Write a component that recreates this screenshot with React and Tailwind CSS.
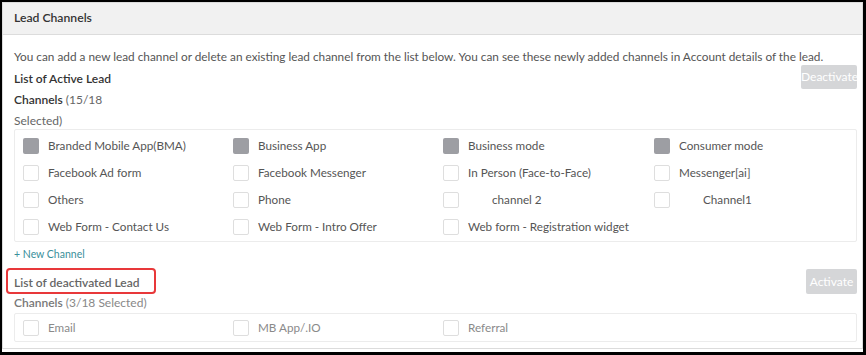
import React from 'react';

const activeChannels = [
  { label: 'Branded Mobile App(BMA)', checked: true },
  { label: 'Business App', checked: true },
  { label: 'Business mode', checked: true },
  { label: 'Consumer mode', checked: true },
  { label: 'Facebook Ad form' },
  { label: 'Facebook Messenger' },
  { label: 'In Person (Face-to-Face)' },
  { label: 'Messenger[ai]' },
  { label: 'Others' },
  { label: 'Phone' },
  { label: 'channel 2', indent: true },
  { label: 'Channel1', indent: true },
  { label: 'Web Form - Contact Us' },
  { label: 'Web Form - Intro Offer' },
  { label: 'Web form - Registration widget' },
];

const deactivatedChannels = [
  { label: 'Email' },
  { label: 'MB App/.IO' },
  { label: 'Referral' },
];

const ChannelItem = ({ label, checked, indent, muted }) => (
  <div className="flex items-center h-[27px]">
    {checked ? (
      <span className="w-4 h-4 rounded-[2px] bg-[#9d9ea3] shrink-0" />
    ) : (
      <span className="w-4 h-4 rounded-[2px] border border-[#dedede] bg-white shrink-0" />
    )}
    <span
      className={
        'ml-[9px] text-[11.7px] whitespace-nowrap ' +
        (indent ? 'pl-6 ' : '') +
        (muted ? 'text-[#8a8a8a]' : 'text-[#555]')
      }
    >
      {label}
    </span>
  </div>
);

export default function App() {
  return (
    <div
      className="w-[866px] h-[355px] bg-white border-black border-t-2 border-l-2 border-r-[3px] border-b-[3px] overflow-hidden"
      style={{ fontFamily: 'Lato, "Noto Sans", sans-serif' }}
    >
      <div className="h-[347px] border border-[#dcdcdc] flex flex-col">
        {/* Header */}
        <div className="h-[32px] shrink-0 bg-[#f1f1f1] border-b border-[#dcdcdc] flex items-center pl-[11px]">
          <span className="text-[12.2px] font-semibold text-[#333]">Lead Channels</span>
        </div>

        <div className="pl-[11px] pr-[5px]">
          <p className="mt-[12px] leading-5 text-[11.8px] text-[#555] whitespace-nowrap">
            You can add a new lead channel or delete an existing lead channel from the list below. You can see these newly added channels in Account details of the lead.
          </p>

          {/* Active list heading */}
          <div className="flex justify-between">
            <div className="mt-[1px] text-[12px] leading-[21px] text-[#333]">
              <div className="font-semibold">List of Active Lead</div>
              <div>
                <span className="font-semibold">Channels</span>{' '}
                <span className="text-[#666]">(15/18</span>
              </div>
              <div className="text-[#666]">Selected)</div>
            </div>
            <button className="mt-[-2px] w-14 h-6 overflow-hidden rounded-[2px] bg-[#d5d6d8] text-white text-[12px] leading-none text-left whitespace-nowrap self-start">
              Deactivate
            </button>
          </div>

          {/* Active grid */}
          <div className="mt-[-2px] border border-[#ececec] rounded-[2px] pl-[8px] pt-[2px] pb-[1px] grid grid-cols-[210px_210px_211px_1fr]">
            {activeChannels.map((c) => (
              <ChannelItem key={c.label} {...c} />
            ))}
          </div>

          <div className="mt-[5px] text-[10.5px] leading-[14px] text-[#3a8f9b]">+ New Channel</div>

          {/* Deactivated heading */}
          <div className="flex justify-between mt-[11px]">
            <div className="text-[12px] leading-[21px]">
              <div className="relative">
                <span className="font-semibold text-[#666]">List of deactivated Lead</span>
                <span className="absolute left-[-8px] top-[-4px] w-[150px] h-[26px] border-2 border-[#e8383a] rounded-[4px]" />
              </div>
              <div className="mt-[-1px]">
                <span className="font-semibold text-[#777]">Channels</span>{' '}
                <span className="text-[#888]">(3/18 Selected)</span>
              </div>
            </div>
            <button className="mt-[-3px] w-[51px] h-[25px] rounded-[2px] bg-[#d5d6d8] text-white text-[12px] leading-none self-start">
              Activate
            </button>
          </div>

          <div className="mt-0 border border-[#ececec] rounded-[2px] pl-[8px] grid grid-cols-[210px_210px_211px_1fr]">
            {deactivatedChannels.map((c) => (
              <ChannelItem key={c.label} {...c} muted />
            ))}
          </div>
        </div>
      </div>
    </div>
  );
}
